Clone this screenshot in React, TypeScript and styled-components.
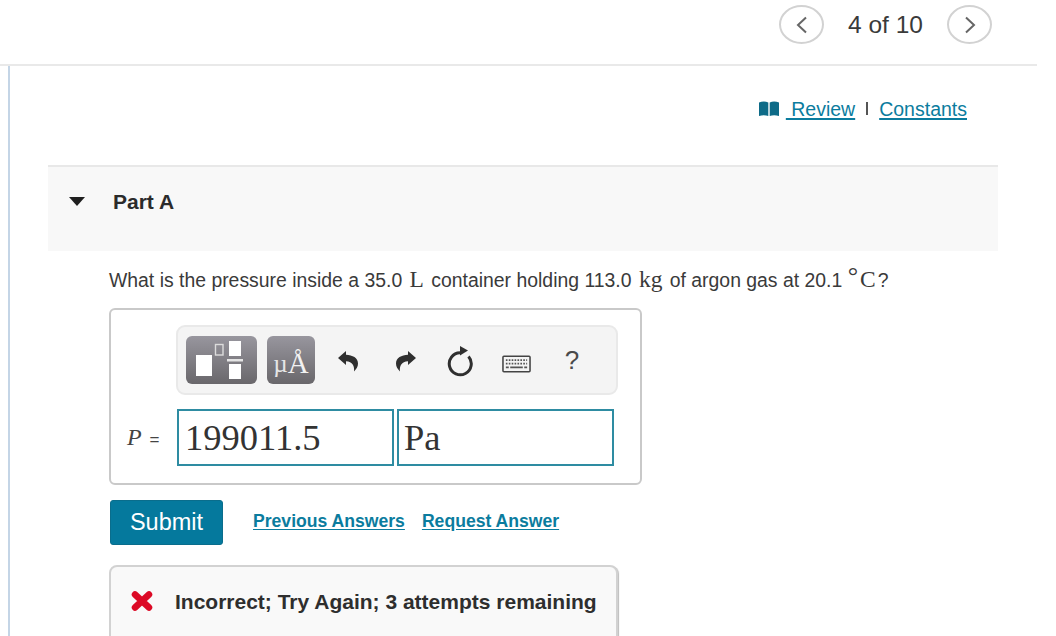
import React from "react";
import styled, { createGlobalStyle } from "styled-components";

const Global = createGlobalStyle`
  html, body { margin: 0; padding: 0; background: #fff; height: 636px; overflow: hidden; }
  body { font-family: "Liberation Sans", Arial, sans-serif; color: #333; }
`;

const Page = styled.div`
  width: 1037px;
  height: 636px;
  overflow: hidden;
`;

const TopBar = styled.header`
  height: 66px;
  box-sizing: border-box;
  border-bottom: 2px solid #e9e9e9;
  display: flex;
  justify-content: flex-end;
  align-items: flex-start;
  padding: 5px 45px 0 0;
`;

const NavButton = styled.button`
  width: 45px;
  height: 39px;
  padding: 0;
  box-sizing: border-box;
  border: 2px solid #d2d2d2;
  border-radius: 50%;
  background: #fff;
  display: flex;
  align-items: center;
  justify-content: center;
`;

const Counter = styled.div`
  width: 123px;
  text-align: center;
  font-size: 24.5px;
  line-height: 40px;
  color: #3a3a3a;
`;

const Body = styled.main`
  margin-left: 8px;
  border-left: 2px solid #c4d5e6;
  height: 570px;
  padding-left: 38px;
`;

const Resources = styled.div`
  height: 99px;
  box-sizing: border-box;
  padding: 31px 31px 0 0;
  width: 950px;
  display: flex;
  justify-content: flex-end;
  align-items: flex-start;
  font-size: 19.5px;
  line-height: 24px;
`;

const ResourceLink = styled.a`
  color: #0b7c9e;
  text-decoration: underline;
  text-decoration-thickness: 1.5px;
  text-underline-offset: 2px;
  white-space: pre;
`;

const BookWrap = styled.span`
  display: inline-flex;
  margin-right: 7px;
  margin-top: 4px;
`;

const Divider = styled.span`
  width: 2px;
  height: 13px;
  margin: 5px 11px 0 11px;
  background: #555;
`;

const PartHeader = styled.section`
  width: 950px;
  height: 86px;
  box-sizing: border-box;
  background: #f8f8f8;
  border-top: 2px solid #e8e8e8;
  display: flex;
  align-items: flex-start;
  padding: 21px 0 0 21px;
`;

const Triangle = styled.span`
  width: 0;
  height: 0;
  margin-top: 9px;
  border-left: 8px solid transparent;
  border-right: 8px solid transparent;
  border-top: 9px solid #1f1f1f;
`;

const PartTitle = styled.h2`
  margin: 0 0 0 28px;
  font-size: 21px;
  line-height: 27px;
  font-weight: 700;
  color: #2b2b2b;
`;

const Content = styled.div`
  padding: 14px 0 0 61px;
`;

const Question = styled.p`
  margin: 0;
  height: 28px;
  font-size: 19.4px;
  line-height: 28px;
  color: #3a3a3a;
  white-space: pre;
`;

const MathText = styled.span`
  font-family: "Liberation Serif", "Times New Roman", serif;
  font-size: 23.5px;
  padding: 0 2px;
`;

const Sup = styled.span`
  position: relative;
  top: -3px;
  font-family: "Liberation Serif", serif;
  font-size: 26px;
  line-height: 0;
`;

const AnswerBox = styled.div`
  margin-top: 15px;
  width: 533px;
  height: 177px;
  box-sizing: border-box;
  border: 2px solid #c9c9c9;
  border-radius: 6px;
  padding: 15px 0 0 65px;
`;

const Toolbar = styled.div`
  width: 442px;
  height: 70px;
  box-sizing: border-box;
  background: #f4f4f4;
  border: 2px solid #e9e9e9;
  border-radius: 9px;
  display: flex;
  align-items: center;
  padding-left: 8px;
`;

const TemplateButton = styled.div<{ $w: number }>`
  width: ${(p) => p.$w}px;
  height: 48px;
  margin-right: 10px;
  border-radius: 6px;
  background: linear-gradient(#98969e, #69676b);
  display: flex;
  align-items: center;
  justify-content: center;
  flex: none;
  overflow: hidden;
`;

const Micro = styled.span`
  font-family: "Liberation Serif", serif;
  font-size: 25px;
  color: #e6e6e6;
  line-height: 48px;
  margin-top: 7px;
`;

const Angstrom = styled.span`
  font-family: "Liberation Serif", serif;
  font-size: 29px;
  color: #f2f2f2;
  line-height: 48px;
  margin-top: 5px;
`;

const ToolIcon = styled.div<{ $w: number; $down?: number }>`
  width: ${(p) => p.$w}px;
  margin-top: ${(p) => p.$down ?? 0}px;
  display: flex;
  justify-content: center;
  align-items: center;
  flex: none;
`;

const Help = styled.span`
  font-size: 26px;
  color: #4a4a4a;
`;

const InputRow = styled.div`
  display: flex;
  align-items: center;
  margin: 14px 0 0 -49px;
`;

const VarLabel = styled.span`
  width: 50px;
  font-size: 17px;
  color: #444;
  white-space: pre;
  & i {
    font-family: "Liberation Serif", serif;
    font-size: 24px;
    margin-right: 3px;
  }
`;

const Field = styled.div<{ $gap?: number; $pad: number }>`
  width: 217px;
  height: 57px;
  box-sizing: border-box;
  border: 2px solid #2e8ca2;
  margin-left: ${(p) => p.$gap ?? 0}px;
  padding-left: ${(p) => p.$pad}px;
  font-family: "Liberation Serif", serif;
  font-size: 36.5px;
  line-height: 53px;
  color: #333;
`;

const Actions = styled.div`
  display: flex;
  align-items: center;
  margin-top: 15px;
`;

const Submit = styled.button`
  width: 113px;
  height: 45px;
  margin-left: 1px;
  border: 1px solid #0a6d8c;
  border-radius: 3px;
  background: #05799d;
  color: #fff;
  font-family: inherit;
  font-size: 23.5px;
  padding: 0;
`;

const ActionLink = styled.a<{ $left: number }>`
  margin-left: ${(p) => p.$left}px;
  margin-top: -2px;
  color: #0b7c9e;
  font-weight: 700;
  font-size: 17.6px;
  text-decoration: underline;
  text-underline-offset: 2px;
`;

const Feedback = styled.div`
  margin-top: 20px;
  width: 509px;
  height: 90px;
  box-sizing: border-box;
  background: #f9f9f9;
  border: 2px solid #d2d2d2;
  border-radius: 8px;
  box-shadow: 1px 1px 1px #bdbdbd;
  display: flex;
  align-items: flex-start;
  padding: 22px 0 0 20px;
`;

const FeedbackText = styled.span`
  margin-left: 22px;
  font-size: 21px;
  line-height: 26px;
  font-weight: 700;
  color: #2e2e2e;
  white-space: pre;
`;

const Chevron = ({ flip }: { flip?: boolean }) => (
  <svg width="14" height="18" viewBox="0 0 14 18">
    <path d={flip ? "M3 1.500l8 7.500-8 7.500" : "M11 1.500L3 9l8 7.500"} fill="none" stroke="#666" strokeWidth="2" />
  </svg>
);

const Book = () => (
  <svg width="20" height="15" viewBox="0 0 20 15">
    <path d="M0 1.500Q5 -.5 9.300 1.500V15Q5 13.500 0 15zM10.700 1.500Q15 -.5 20 1.500V15Q15 13.500 10.700 15z" fill="#0e6b88" />
  </svg>
);

const Template = () => (
  <svg width="71" height="48" viewBox="0 0 71 48">
    <rect x="10" y="19" width="16" height="21" fill="#fff" />
    <rect x="29.500" y="8.500" width="7.500" height="10.500" fill="none" stroke="#dcdcdc" strokeWidth="1.400" />
    <rect x="43" y="5" width="12" height="15" fill="#fff" />
    <rect x="41" y="23" width="16" height="2.500" fill="#e4e4e4" />
    <rect x="43" y="28" width="12" height="15" fill="#fff" />
  </svg>
);

const Undo = ({ flip }: { flip?: boolean }) => (
  <svg width="22" height="24" viewBox="0 0 22 24" style={flip ? { transform: "scaleX(-1)" } : undefined}>
    <path d="M1 8L9 1v3.800C15.500 5 21 8 21 13.500c0 3-1.500 5.500-4 8 .8-5.500-1.500-9.800-8-10.300V15z" fill="#2f2f2f" />
  </svg>
);

const Reset = () => (
  <svg width="26" height="34" viewBox="0 0 26 34" style={{ marginTop: 4 }}>
    <path d="M13 7.800A11 11 0 1 0 21.500 11.500" fill="none" stroke="#2f2f2f" strokeWidth="3" />
    <path d="M13 1L21 5.500 13 10.500z" fill="#2f2f2f" />
  </svg>
);

const Keyboard = () => (
  <svg width="29" height="18" viewBox="0 0 30 18">
    <rect x="1" y="1" width="28" height="16" rx="1" fill="#f4f4f4" stroke="#444" strokeWidth="1.600" />
    <path d="M4 5h22M4 8.500h22" stroke="#555" strokeWidth="1.800" strokeDasharray="1.700 1.300" />
    <path d="M4 12.500h3M8.500 12.500h13M23 12.500h3" stroke="#555" strokeWidth="1.800" />
  </svg>
);

const Cross = () => (
  <svg width="22" height="20" viewBox="0 0 22 20" style={{ marginTop: 2 }}>
    <path d="M4 3.500L18 16.500M18 3.500L4 16.500" stroke="#dc0a26" strokeWidth="6.500" strokeLinecap="round" />
  </svg>
);

export default function App() {
  return (
    <Page>
      <Global />
      <TopBar>
        <NavButton aria-label="Previous"><Chevron /></NavButton>
        <Counter>4 of 10</Counter>
        <NavButton aria-label="Next"><Chevron flip /></NavButton>
      </TopBar>
      <Body>
        <Resources>
          <BookWrap><Book /></BookWrap>
          <ResourceLink> Review</ResourceLink>
          <Divider />
          <ResourceLink>Constants</ResourceLink>
        </Resources>
        <PartHeader>
          <Triangle />
          <PartTitle>Part A</PartTitle>
        </PartHeader>
        <Content>
          <Question>
            What is the pressure inside a 35.0 <MathText>L</MathText> container holding 113.0 <MathText>kg</MathText> of argon gas at 20.1 <Sup>°</Sup><MathText>C</MathText>?
          </Question>
          <AnswerBox>
            <Toolbar>
              <TemplateButton $w={71}><Template /></TemplateButton>
              <TemplateButton $w={48}><Micro>µ</Micro><Angstrom>Å</Angstrom></TemplateButton>
              <ToolIcon $w={46} $down={4}><Undo /></ToolIcon>
              <ToolIcon $w={70} $down={4}><Undo flip /></ToolIcon>
              <ToolIcon $w={38}><Reset /></ToolIcon>
              <ToolIcon $w={74} $down={8}><Keyboard /></ToolIcon>
              <ToolIcon $w={38}><Help>?</Help></ToolIcon>
            </Toolbar>
            <InputRow>
              <VarLabel><i>P</i> =</VarLabel>
              <Field $pad={6}>199011.5</Field>
              <Field $gap={3} $pad={5}>Pa</Field>
            </InputRow>
          </AnswerBox>
          <Actions>
            <Submit>Submit</Submit>
            <ActionLink $left={30}>Previous Answers</ActionLink>
            <ActionLink $left={17}>Request Answer</ActionLink>
          </Actions>
          <Feedback>
            <Cross />
            <FeedbackText>Incorrect; Try Again; 3 attempts remaining</FeedbackText>
          </Feedback>
        </Content>
      </Body>
    </Page>
  );
}
